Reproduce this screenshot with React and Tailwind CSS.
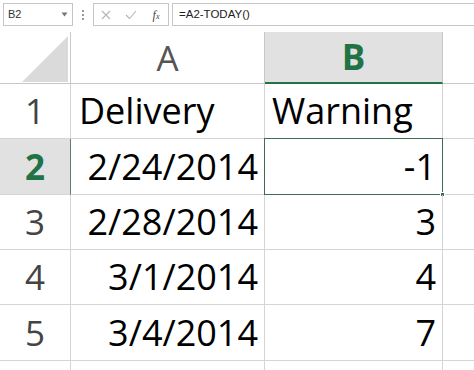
import React from "react";

const font = { fontFamily: '"Open Sans", "Liberation Sans", sans-serif' };

function Row({ n, a, b, aLeft, bLeft, selected, h }) {
  return (
    <>
      <div
        className={`flex items-center justify-center border-b border-r ${
          selected
            ? "bg-[#e1e1e1] border-r-[#5f7f6a] border-b-[#d4d4d4] text-[#217346] font-bold"
            : "bg-white border-[#d4d4d4] text-[#444]"
        } text-[35px] leading-[44px]`}
        style={{ height: h }}
      >
        {n}
      </div>
      <div
        className={`flex items-center border-b border-r border-[#d4d4d4] text-[36px] leading-[44px] text-black ${
          aLeft ? "justify-start pl-[8px]" : "justify-end pr-[6px]"
        }`}
        style={{ height: h }}
      >
        {a}
      </div>
      <div
        className={`relative flex items-center border-b border-r border-[#d4d4d4] text-[36px] leading-[44px] text-black ${
          bLeft ? "justify-start pl-[7px]" : "justify-end pr-[6px]"
        }`}
        style={{ height: h }}
      >
        {b}
        {selected && (
          <>
            <div className="absolute left-[-1px] top-[-1px] right-[-1px] bottom-[-1px] border-[1.5px] border-[#3f6b52]" />
            <div className="absolute right-[-3px] bottom-[-3px] w-[5px] h-[5px] bg-[#3f6b52] border border-white" />
          </>
        )}
      </div>
      <div className="border-b border-[#d4d4d4]" style={{ height: h }} />
    </>
  );
}

export default function App() {
  return (
    <div className="w-[474px] h-[370px] overflow-hidden bg-white" style={font}>
      {/* formula bar */}
      <div className="flex items-start h-[32px] pt-[3px] bg-white">
        <div className="ml-[3px] w-[70px] h-[23px] border border-[#c6c6c6] flex items-center justify-between pl-[4px] pr-[4px]">
          <span className="text-[11px] text-[#333]" style={{ fontFamily: '"Liberation Sans", sans-serif' }}>B2</span>
          <svg width="7" height="5" viewBox="0 0 7 5">
            <path d="M0.5 0.5 L6.5 0.5 L3.5 4.5 Z" fill="#777" />
          </svg>
        </div>
        <div className="w-[20px] h-[23px] flex flex-col items-center justify-center gap-[2px]">
          <div className="w-[2px] h-[2px] bg-[#999]" />
          <div className="w-[2px] h-[2px] bg-[#999]" />
          <div className="w-[2px] h-[2px] bg-[#999]" />
        </div>
        <div className="w-[76px] h-[23px] border border-[#c6c6c6] flex items-center">
          <div className="w-[24px] flex justify-center">
            <svg width="10" height="10" viewBox="0 0 10 10">
              <path d="M1 1 L9 9 M9 1 L1 9" stroke="#b5b5b5" strokeWidth="1.1" />
            </svg>
          </div>
          <div className="w-[26px] flex justify-center">
            <svg width="12" height="10" viewBox="0 0 12 10">
              <path d="M1 5 L4.5 8.5 L11 1" stroke="#b5b5b5" strokeWidth="1.1" fill="none" />
            </svg>
          </div>
          <div className="w-[24px] flex justify-center">
            <span className="text-[12px] italic text-[#444]" style={{ fontFamily: '"Liberation Serif", serif' }}>
              f<span className="text-[8px]">x</span>
            </span>
          </div>
        </div>
        <div className="ml-[3px] flex-1 h-[23px] border-y border-l border-[#c6c6c6] flex items-center pl-[6px]">
          <span className="text-[11.5px] text-[#222]" style={{ fontFamily: '"Liberation Sans", sans-serif' }}>
            =A2-TODAY()
          </span>
        </div>
      </div>

      {/* grid */}
      <div className="grid grid-cols-[71px_194px_178px_1fr]">
        {/* header row */}
        <div className="relative h-[52px] border-r border-b border-[#c8c8c8] bg-white">
          <svg className="absolute left-[22px] top-[4px]" width="46" height="46" viewBox="0 0 46 46">
            <path d="M46 0 L46 46 L0 46 Z" fill="#dadada" />
          </svg>
        </div>
        <div className="h-[52px] flex items-center justify-center border-r border-b border-[#c8c8c8] text-[35px] leading-[44px] text-[#555] bg-white">
          A
        </div>
        <div className="h-[52px] flex items-center justify-center border-r border-[#c8c8c8] border-b-2 border-b-[#217346] bg-[#e1e1e1] text-[35px] leading-[44px] text-[#217346] font-bold">
          B
        </div>
        <div className="h-[52px] border-b border-[#c8c8c8] bg-white" />

        <Row n="1" a="Delivery" b="Warning" aLeft bLeft h={55} />
        <Row n="2" a="2/24/2014" b="-1" selected h={56} />
        <Row n="3" a="2/28/2014" b="3" h={55} />
        <Row n="4" a="3/1/2014" b="4" h={55} />
        <Row n="5" a="3/4/2014" b="7" h={56} />
        <Row n="" a="" b="" h={40} />
      </div>
    </div>
  );
}
